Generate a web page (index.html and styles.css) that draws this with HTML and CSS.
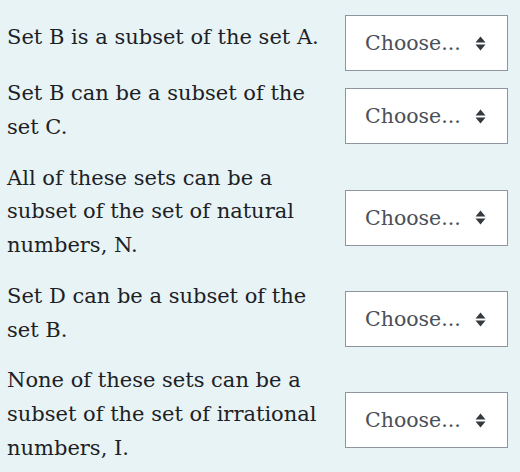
FILE: index.html
```html
<!DOCTYPE html>
<html>
<head>
<meta charset="utf-8">
<link rel="stylesheet" href="styles.css">
</head>
<body>
<div class="match">
  <div class="row">
    <div class="text">Set B is a subset of the set A.</div>
    <div class="select"><span>Choose...</span><svg class="arrow" width="11" height="15" viewBox="0 0 11 15"><polygon points="0.5,6.5 5.5,0.5 10.5,6.5"/><polygon points="0.5,8.5 5.5,14.5 10.5,8.5"/></svg></div>
  </div>
  <div class="row">
    <div class="text">Set B can be a subset of the set C.</div>
    <div class="select"><span>Choose...</span><svg class="arrow" width="11" height="15" viewBox="0 0 11 15"><polygon points="0.5,6.5 5.5,0.5 10.5,6.5"/><polygon points="0.5,8.5 5.5,14.5 10.5,8.5"/></svg></div>
  </div>
  <div class="row">
    <div class="text">All of these sets can be a subset of the set of natural numbers, N.</div>
    <div class="select"><span>Choose...</span><svg class="arrow" width="11" height="15" viewBox="0 0 11 15"><polygon points="0.5,6.5 5.5,0.5 10.5,6.5"/><polygon points="0.5,8.5 5.5,14.5 10.5,8.5"/></svg></div>
  </div>
  <div class="row">
    <div class="text">Set D can be a subset of the set B.</div>
    <div class="select"><span>Choose...</span><svg class="arrow" width="11" height="15" viewBox="0 0 11 15"><polygon points="0.5,6.5 5.5,0.5 10.5,6.5"/><polygon points="0.5,8.5 5.5,14.5 10.5,8.5"/></svg></div>
  </div>
  <div class="row">
    <div class="text">None of these sets can be a subset of the set of irrational numbers, I.</div>
    <div class="select"><span>Choose...</span><svg class="arrow" width="11" height="15" viewBox="0 0 11 15"><polygon points="0.5,6.5 5.5,0.5 10.5,6.5"/><polygon points="0.5,8.5 5.5,14.5 10.5,8.5"/></svg></div>
  </div>
</div>
</body>
</html>
```
FILE: styles.css
```css
html, body {
  margin: 0;
  padding: 0;
  background: #e7f3f5;
}
body {
  font-family: "DejaVu Serif", "Liberation Serif", serif;
  font-size: 21px;
  color: #1d2125;
}
.match {
  display: flex;
  flex-direction: column;
  gap: 6px;
  padding: 15px 0 0 7px;
}
.row {
  display: flex;
  align-items: center;
  gap: 23px;
}
.text {
  width: 315px;
  line-height: 33.75px;
  padding-bottom: 11px;
}
.select {
  box-sizing: border-box;
  width: 163px;
  height: 56px;
  background: #fff;
  border: 1px solid #8f959e;
  color: #495057;
  display: flex;
  align-items: center;
  justify-content: space-between;
  padding: 0 21px 0 19px;
  font-size: 20.5px;
}
.arrow {
  fill: #343a40;
}
```
